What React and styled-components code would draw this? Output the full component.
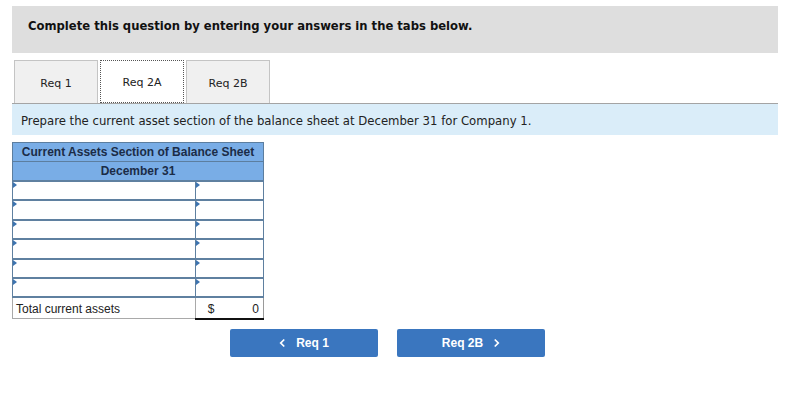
import React from "react";
import styled, { createGlobalStyle } from "styled-components";

const rows = [0, 1, 2, 3, 4, 5];

export default function App() {
  return (
    <>
      <GlobalStyle />
      <Page>
        <Header>Complete this question by entering your answers in the tabs below.</Header>
        <Tabs>
          <Tab>Req 1</Tab>
          <Tab $active>Req 2A</Tab>
          <Tab>Req 2B</Tab>
        </Tabs>
        <Instruction>
          Prepare the current asset section of the balance sheet at December 31 for Company 1.
        </Instruction>
        <Sheet>
          <tbody>
            <tr>
              <HeadCell colSpan={2}>Current Assets Section of Balance Sheet</HeadCell>
            </tr>
            <tr>
              <HeadCell colSpan={2} $sub>December 31</HeadCell>
            </tr>
            {rows.map((r) => (
              <tr key={r}>
                <InputCell $w={184} />
                <InputCell $w={68} />
              </tr>
            ))}
            <tr>
              <TotalLabel>Total current assets</TotalLabel>
              <TotalAmount>
                <span>$</span>
                <span>0</span>
              </TotalAmount>
            </tr>
          </tbody>
        </Sheet>
        <Nav>
          <NavButton>
            <Chevron viewBox="0 0 8 10">
              <path d="M6 1 L2 5 L6 9" />
            </Chevron>
            Req 1
          </NavButton>
          <NavButton>
            Req 2B
            <Chevron viewBox="0 0 8 10">
              <path d="M2 1 L6 5 L2 9" />
            </Chevron>
          </NavButton>
        </Nav>
      </Page>
    </>
  );
}

const GlobalStyle = createGlobalStyle`
  body {
    margin: 0;
    background: #ffffff;
  }
`;

const Page = styled.div`
  width: 766px;
  padding: 6px 0 0 12px;
`;

const Header = styled.div`
  height: 47px;
  background: #dedede;
  padding: 0 0 7px 16px;
  display: flex;
  align-items: center;
  font-family: "DejaVu Sans", Verdana, sans-serif;
  font-weight: bold;
  font-size: 11.6px;
  color: #111;
  box-sizing: border-box;
`;

const Tabs = styled.div`
  display: flex;
  gap: 1px;
  margin-top: 7px;
  padding-left: 2px;
`;

const Tab = styled.div`
  width: 84px;
  height: 43px;
  box-sizing: border-box;
  display: flex;
  align-items: center;
  justify-content: center;
  padding-top: 2px;
  font-family: "DejaVu Sans", Verdana, sans-serif;
  font-size: 11px;
  color: #222;
  background: ${({ $active }) => ($active ? "#ffffff" : "#f0f0f0")};
  border: 1px ${({ $active }) => ($active ? "dotted #555" : "solid #c4c4c4")};
  border-bottom: ${({ $active }) => ($active ? "1px dotted #555" : "none")};
  margin-left: ${({ $active }) => ($active ? "1px" : "0")};
  margin-right: ${({ $active }) => ($active ? "1px" : "0")};
  margin-bottom: ${({ $active }) => ($active ? "-1px" : "0")};
  position: relative;
  z-index: ${({ $active }) => ($active ? 1 : 0)};
`;

const Instruction = styled.div`
  height: 32px;
  box-sizing: border-box;
  background: #daedf9;
  border-top: 1px solid #a4a4a4;
  padding: 2px 0 0 9px;
  display: flex;
  align-items: center;
  font-family: "DejaVu Sans", Verdana, sans-serif;
  font-size: 11.7px;
  color: #222;
`;

const Sheet = styled.table`
  margin-top: 7px;
  border-collapse: collapse;
  width: 252px;
  font-family: "Liberation Sans", Arial, sans-serif;
  font-size: 12px;
`;

const HeadCell = styled.td`
  height: 18px;
  padding: 0;
  background: #79ade6;
  border: 1px solid #5c7e9f;
  text-align: center;
  font-weight: bold;
  color: #1b2c47;
`;

const InputCell = styled.td`
  width: ${({ $w }) => $w}px;
  height: 17.4px;
  padding: 0;
  background: #ffffff;
  border: 2px solid #5f80a0;
  border-left-width: 1px;
  border-right-width: 1px;
  position: relative;

  &::before {
    content: "";
    position: absolute;
    left: 0;
    top: 0;
    border-left: 4px solid #3d74b0;
    border-top: 3px solid transparent;
    border-bottom: 3px solid transparent;
  }
`;

const TotalLabel = styled.td`
  height: 19px;
  padding: 1px 0 0 3px;
  border: 1px solid #a9a9a9;
  border-top: 1px solid #cfcfcf;
  color: #222;
`;

const TotalAmount = styled.td`
  padding: 1px 4px 0 12px;
  border: 1px solid #9a9a9a;
  border-bottom: 2px solid #111;
  color: #222;

  & > span {
    display: inline-block;
  }
  & > span:last-child {
    float: right;
  }
`;

const Nav = styled.div`
  display: flex;
  gap: 19px;
  margin-top: 9px;
  padding-left: 218px;
`;

const NavButton = styled.button`
  width: 148px;
  height: 28px;
  border: none;
  border-radius: 2px;
  background: #3a76bf;
  color: #ffffff;
  font-family: "Liberation Sans", Arial, sans-serif;
  font-weight: bold;
  font-size: 12px;
  display: flex;
  align-items: center;
  justify-content: center;
  gap: 10px;
  padding: 0;
`;

const Chevron = styled.svg`
  width: 7px;
  height: 10px;
  fill: none;
  stroke: #ffffff;
  stroke-width: 2;
`;
